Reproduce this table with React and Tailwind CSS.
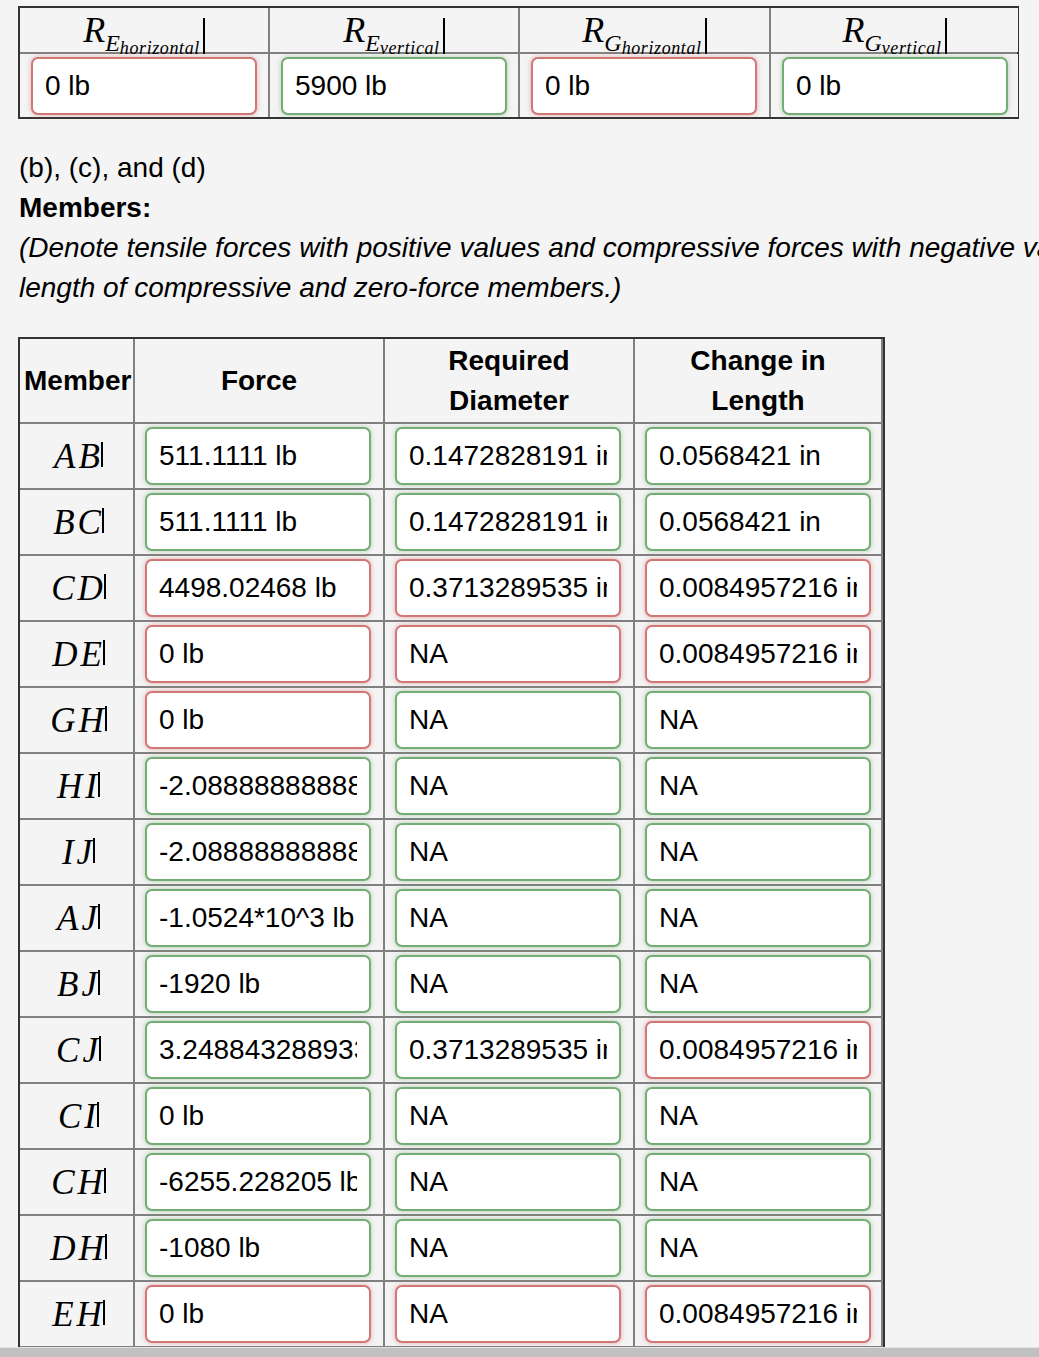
const SANS = "font-['Liberation_Sans',Arial,sans-serif]";
const SERIF = "font-['Liberation_Serif','Times_New_Roman',serif]";

const reactions = [
  { sub: 'E', subsub: 'horizontal', value: '0 lb', ok: false },
  { sub: 'E', subsub: 'vertical', value: '5900 lb', ok: true },
  { sub: 'G', subsub: 'horizontal', value: '0 lb', ok: false },
  { sub: 'G', subsub: 'vertical', value: '0 lb', ok: true },
];

// [label, force, ok, diameter, ok, change in length, ok]
const members = [
  ['AB', '511.1111 lb', 1, '0.1472828191 in', 1, '0.0568421 in', 1],
  ['BC', '511.1111 lb', 1, '0.1472828191 in', 1, '0.0568421 in', 1],
  ['CD', '4498.02468 lb', 0, '0.3713289535 in', 0, '0.0084957216 in', 0],
  ['DE', '0 lb', 0, 'NA', 0, '0.0084957216 in', 0],
  ['GH', '0 lb', 0, 'NA', 1, 'NA', 1],
  ['HI', '-2.088888888889 lb', 1, 'NA', 1, 'NA', 1],
  ['IJ', '-2.088888888889 lb', 1, 'NA', 1, 'NA', 1],
  ['AJ', '-1.0524*10^3 lb', 1, 'NA', 1, 'NA', 1],
  ['BJ', '-1920 lb', 1, 'NA', 1, 'NA', 1],
  ['CJ', '3.248843288933 lb', 1, '0.3713289535 in', 1, '0.0084957216 in', 0],
  ['CI', '0 lb', 1, 'NA', 1, 'NA', 1],
  ['CH', '-6255.228205 lb', 1, 'NA', 1, 'NA', 1],
  ['DH', '-1080 lb', 1, 'NA', 1, 'NA', 1],
  ['EH', '0 lb', 0, 'NA', 0, '0.0084957216 in', 0],
  ['FG', '0 lb', 1, 'NA', 1, 'NA', 1],
];

function Answer({ value, ok, className = '' }) {
  return (
    <input
      readOnly
      value={value}
      className={`block h-[58px] w-[226px] rounded-[7px] border-2 bg-white pl-[12px] pr-[12px] text-[28px] text-black outline-none ${SANS} ${
        ok
          ? 'border-[#74ad74] shadow-[0_0_5px_rgba(116,173,116,0.55)]'
          : 'border-[#d27676] shadow-[0_0_5px_rgba(210,118,118,0.55)]'
      } ${className}`}
    />
  );
}

function Cursor({ className }) {
  return <span className={`inline-block bg-black ${className}`} />;
}

function ReactionHead({ sub, subsub }) {
  return (
    <div className={`flex h-[44px] items-start justify-center pt-[4px] text-black ${SERIF}`}>
      <span className="whitespace-nowrap leading-none">
        <span className="text-[36px] italic">R</span>
        <span className="relative top-[9px] text-[24px] italic">
          {sub}
          <span className="relative top-[3px] text-[18px] tracking-[0.6px]">{subsub}</span>
        </span>
        <Cursor className="ml-[3px] h-[36px] w-[2px] align-[-12px]" />
      </span>
    </div>
  );
}

function MemberLabel({ name }) {
  return (
    <div className={`flex h-full items-center justify-center pl-[4px] text-black ${SERIF}`}>
      <span className="whitespace-nowrap text-[35px] italic leading-none tracking-[3px]">{name}</span>
      <Cursor className="h-[25px] w-[2px] -ml-[2px] mt-[-4px]" />
    </div>
  );
}

export default function App() {
  return (
    <div className={`flex h-[1357px] w-[1039px] flex-col overflow-hidden bg-[#f4f4f4] text-black ${SANS}`}>
      <div className="min-h-0 flex-1 overflow-hidden">
        <div className="w-[1400px] pl-[18px] pt-[6px]">
          {/* support reactions */}
          <div className="grid w-[1001px] grid-cols-[248px_248px_249px_247px] gap-[2px] border-2 border-[#333] bg-[#808080]">
            {reactions.map((r, i) => (
              <div key={'h' + i} className="bg-[#f4f4f4]">
                <ReactionHead sub={r.sub} subsub={r.subsub} />
              </div>
            ))}
            {reactions.map((r, i) => (
              <div key={'v' + i} className="bg-[#f4f4f4] pb-[2px] pl-[11px] pt-[3px]">
                <Answer value={r.value} ok={r.ok} className="w-[225px]" />
              </div>
            ))}
          </div>

          <div className="mt-[29px] text-[28px] leading-[40px]">
            <p className="pl-[1px]">(b), (c), and (d)</p>
            <p className="pl-[1px] font-bold">Members:</p>
            <p className="whitespace-nowrap pl-[1px] italic">
              (Denote tensile forces with positive values and compressive forces with negative values. Enter NA for the
              diameter and change in
              <br />
              length of compressive and zero-force members.)
            </p>
          </div>

          {/* member table */}
          <div className="mt-[29px] grid w-[867px] grid-cols-[113px_248px_248px_246px] gap-[2px] border-2 border-[#333] bg-[#808080]">
            <div className="flex h-[83px] items-center bg-[#f4f4f4] pl-[4px] text-[28px] font-bold">Member</div>
            <div className="flex items-center justify-center bg-[#f4f4f4] text-[28px] font-bold">Force</div>
            <div className="flex items-center justify-center bg-[#f4f4f4] text-center text-[28px] font-bold leading-[40px]">
              Required
              <br />
              Diameter
            </div>
            <div className="flex items-center justify-center bg-[#f4f4f4] text-center text-[28px] font-bold leading-[40px]">
              Change in
              <br />
              Length
            </div>
            {members.map(([name, f, fOk, d, dOk, l, lOk]) => (
              <div key={name} className="contents">
                <div className="h-[64px] bg-[#f4f4f4]">
                  <MemberLabel name={name} />
                </div>
                <div className="bg-[#f4f4f4] pl-[10px] pt-[3px]">
                  <Answer value={f} ok={fOk} />
                </div>
                <div className="bg-[#f4f4f4] pl-[10px] pt-[3px]">
                  <Answer value={d} ok={dOk} />
                </div>
                <div className="bg-[#f4f4f4] pl-[10px] pt-[3px]">
                  <Answer value={l} ok={lOk} />
                </div>
              </div>
            ))}
          </div>
        </div>
      </div>
      <div className="h-[10px] border-t border-[#e4e4e4] bg-[#c1c1c1]" />
    </div>
  );
}
